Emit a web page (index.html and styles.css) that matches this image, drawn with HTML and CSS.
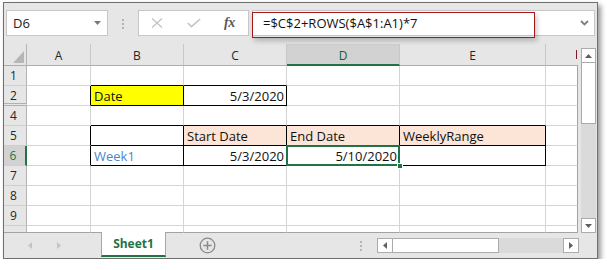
FILE: index.html
```html
<!DOCTYPE html>
<html>
<head>
<meta charset="utf-8">
<link rel="stylesheet" href="styles.css">
</head>
<body>
<div class="window">
  <div class="toolbar">
    <div class="namebox"><span class="nb-text">D6</span><svg class="caret" width="7" height="4" viewBox="0 0 7 4"><polygon points="0,0 7,0 3.5,4" fill="#7a7a7a"/></svg></div>
    <div class="grip"><i></i><i></i><i></i></div>
    <div class="fxbox">
      <svg class="ic-x" width="12" height="10" viewBox="0 0 12 10"><path d="M1 0.5 L11 9.5 M11 0.5 L1 9.5" stroke="#c4c4c4" stroke-width="1.4" fill="none"/></svg>
      <svg class="ic-ok" width="14" height="10" viewBox="0 0 14 10"><path d="M0.8 5 L4.5 8.6 L13.2 1" stroke="#c4c4c4" stroke-width="1.6" fill="none"/></svg>
      <span class="fx">fx</span>
    </div>
    <div class="formula">
      <span class="ftext">=$C$2+ROWS($A$1:A1)*7</span>
      <svg class="chev" width="9" height="6" viewBox="0 0 9 6"><path d="M1 1 L4.5 4.5 L8 1" stroke="#7f7f7f" stroke-width="1.8" fill="none"/></svg>
      <div class="hl"></div>
    </div>
  </div>
  <div class="main">
    <div class="sheet">
      <!-- header -->
      <div class="corner"><svg width="11" height="12" viewBox="0 0 11 12"><polygon points="11,0 11,12 0,12" fill="#b6b6b6"/></svg></div>
      <div class="ch">A</div>
      <div class="ch">B</div>
      <div class="ch">C</div>
      <div class="ch sel">D</div>
      <div class="ch">E</div>
      <div class="ch fh"><span class="mark"></span></div>
      <!-- row 1 -->
      <div class="rh">1</div>
      <div class="c"></div>
      <div class="c bb"></div>
      <div class="c bb"></div>
      <div class="c"></div>
      <div class="c"></div>
      <div class="c f"></div>
      <!-- row 2 -->
      <div class="rh hid">2</div>
      <div class="c br"></div>
      <div class="c bk yel">Date</div>
      <div class="c bk r">5/3/2020</div>
      <div class="c"></div>
      <div class="c"></div>
      <div class="c f"></div>
      <!-- row 4 -->
      <div class="rh">4</div>
      <div class="c"></div>
      <div class="c bb"></div>
      <div class="c bb"></div>
      <div class="c bb"></div>
      <div class="c bb"></div>
      <div class="c f"></div>
      <!-- row 5 -->
      <div class="rh">5</div>
      <div class="c br"></div>
      <div class="c bk"></div>
      <div class="c bk pch">Start Date</div>
      <div class="c bk pch">End Date</div>
      <div class="c bk pch">WeeklyRange</div>
      <div class="c f"></div>
      <!-- row 6 -->
      <div class="rh rsel">6</div>
      <div class="c br"></div>
      <div class="c bk blue">Week1</div>
      <div class="c bk r">5/3/2020</div>
      <div class="c bk r active">5/10/2020<span class="selbox"></span><span class="handle"></span></div>
      <div class="c bk"></div>
      <div class="c f"></div>
      <!-- row 7 -->
      <div class="rh">7</div>
      <div class="c"></div>
      <div class="c"></div>
      <div class="c"></div>
      <div class="c"></div>
      <div class="c"></div>
      <div class="c f"></div>
      <!-- row 8 -->
      <div class="rh">8</div>
      <div class="c"></div>
      <div class="c"></div>
      <div class="c"></div>
      <div class="c"></div>
      <div class="c"></div>
      <div class="c f"></div>
      <!-- row 9 -->
      <div class="rh">9</div>
      <div class="c"></div>
      <div class="c"></div>
      <div class="c"></div>
      <div class="c"></div>
      <div class="c"></div>
      <div class="c f"></div>
      <!-- partial row -->
      <div class="rh last"></div>
      <div class="c last"></div>
      <div class="c last"></div>
      <div class="c last"></div>
      <div class="c last"></div>
      <div class="c last"></div>
      <div class="c f last"></div>
    </div>
    <div class="vscroll">
      <div class="sbtn"><svg width="7" height="4" viewBox="0 0 7 4"><polygon points="0,4 7,4 3.5,0" fill="#606060"/></svg></div>
      <div class="vthumb"></div>
      <div class="vtrack"></div>
      <div class="sbtn"><svg width="7" height="4" viewBox="0 0 7 4"><polygon points="0,0 7,0 3.5,4" fill="#606060"/></svg></div>
    </div>
  </div>
  <div class="tabbar">
    <div class="nav">
      <svg class="nl" width="4" height="7" viewBox="0 0 4 7"><polygon points="4,0 4,7 0,3.5" fill="#c4c4c4"/></svg>
      <svg class="nr" width="4" height="7" viewBox="0 0 4 7"><polygon points="0,0 0,7 4,3.5" fill="#c4c4c4"/></svg>
    </div>
    <div class="tab">Sheet1</div>
    <svg class="add" width="17" height="17" viewBox="0 0 17 17"><circle cx="8.5" cy="8.5" r="7.3" stroke="#8a8a8a" stroke-width="1.3" fill="none"/><path d="M8.5 4.3 V12.7 M4.3 8.5 H12.7" stroke="#8a8a8a" stroke-width="1.5"/></svg>
    <div class="grip g2"><i></i><i></i><i></i></div>
    <div class="hscroll">
      <div class="hbtn"><svg width="4" height="7" viewBox="0 0 4 7"><polygon points="4,0 4,7 0,3.5" fill="#606060"/></svg></div>
      <div class="hthumb"></div>
      <div class="htrack"></div>
      <div class="hbtn"><svg width="4" height="7" viewBox="0 0 4 7"><polygon points="0,0 0,7 4,3.5" fill="#606060"/></svg></div>
    </div>
  </div>
</div>
</body>
</html>
```
FILE: styles.css
```css
* { box-sizing: border-box; }
body {
  margin: 0;
  background: #ffffff;
  font-family: "Open Sans", "Noto Sans", sans-serif;
}
.window {
  margin: 2px 0 0 3px;
  width: 595px;
  height: 257px;
  border: 1px solid #6f6f6f;
  background: #e6e6e6;
  box-shadow: 3px 3px 5px rgba(0,0,0,0.4);
  display: flex;
  flex-direction: column;
}
/* toolbar */
.toolbar {
  height: 41px;
  display: flex;
  align-items: flex-start;
  padding-top: 7px;
  flex: none;
}
.namebox {
  margin-left: 2px;
  width: 102px;
  height: 26px;
  background: #fff;
  border: 1px solid #c6c6c6;
  display: flex;
  align-items: center;
  padding-left: 6px;
  padding-right: 6px;
  font-size: 13px;
  color: #222;
}
.nb-text { flex: 1; line-height: 24px; }
.caret { margin-bottom: 1px; }
.grip {
  width: 2px;
  margin: 9px 14px 0 14px;
  display: flex;
  flex-direction: column;
  gap: 2px;
}
.grip i {
  display: block;
  width: 2px;
  height: 2px;
  background: #b4b4b4;
}
.fxbox {
  width: 111px;
  height: 26px;
  background: #fff;
  border: 1px solid #c6c6c6;
  display: flex;
  align-items: center;
}
.ic-x { margin-left: 12px; }
.ic-ok { margin-left: 24px; }
.fx {
  margin-left: 23px;
  font-family: "Liberation Serif", serif;
  font-style: italic;
  font-weight: bold;
  font-size: 14px;
  color: #5a5a5a;
  letter-spacing: -0.3px;
  line-height: 24px;
}
.formula {
  position: relative;
  margin-left: 3px;
  width: 343px;
  height: 26px;
  background: #fff;
  border: 1px solid #c6c6c6;
  display: flex;
  align-items: center;
  padding-left: 10px;
  padding-right: 5px;
}
.ftext {
  flex: 1;
  font-size: 13px;
  line-height: 24px;
  color: #111;
  white-space: nowrap;
}
.hl {
  position: absolute;
  left: -1px;
  top: 1px;
  width: 283px;
  height: 26px;
  border: 1.5px solid #a31818;
  box-shadow: 2px 3px 5px rgba(0,0,0,0.22);
}
/* main */
.main {
  height: 189px;
  display: flex;
  flex: none;
}
.sheet {
  width: 574px;
  display: grid;
  grid-template-columns: 23px 64px 93px 103px 113px 146px 32px;
  grid-template-rows: 22px repeat(8, 20px) 7px;
  background: #fff;
  font-size: 13px;
  color: #111;
}
.corner {
  background: #e6e6e6;
  border-right: 1px solid #b4b4b4;
  border-bottom: 1px solid #adadad;
  display: flex;
  justify-content: flex-end;
  align-items: flex-end;
  padding: 0 2px 2px 0;
}
.ch {
  background: #e6e6e6;
  border-right: 1px solid #c8c8c8;
  border-bottom: 1px solid #adadad;
  text-align: center;
  font-size: 12px;
  color: #262626;
  padding-top: 2px;
  line-height: 19px;
}
.ch.sel {
  background: #d2d2d2;
  border-bottom: 2px solid #217346;
  color: #1b5d38;
}
.ch.fh {
  border-right: none;
  display: flex;
  justify-content: flex-end;
  align-items: flex-start;
  padding-top: 6px;
}
.mark {
  width: 1.5px;
  height: 9px;
  background: #7a1d2b;
  margin-right: 1px;
}
.rh {
  background: #e6e6e6;
  border-right: 1px solid #b4b4b4;
  border-bottom: 1px solid #cfcfcf;
  text-align: center;
  font-size: 12px;
  color: #262626;
  line-height: 19px;
  padding-right: 3px;
}
.rh.hid {
  border-bottom: 3px double #b0b0b0;
}
.rh.rsel {
  background: #d2d2d2;
  border-right: 2px solid #217346;
  color: #217346;
}
.c {
  border-right: 1px solid #d4d4d4;
  border-bottom: 1px solid #d4d4d4;
  padding: 1px 2px 0 3px;
  line-height: 19px;
  white-space: nowrap;
  overflow: hidden;
}
.c.bb { border-bottom-color: #000; }
.c.br { border-right-color: #000; }
.c.bk { border-right-color: #000; border-bottom-color: #000; }
.c.r { text-align: right; }
.c.yel { background: #ffff00; }
.c.pch { background: #fce4d6; }
.c.blue { color: #4a86c8; }
.c.f { border-right-color: #a3a3a3; }
.rh.last, .c.last { border-bottom: 1px solid #a3a3a3; }
.c.active {
  position: relative;
  overflow: visible;
}
.selbox {
  position: absolute;
  left: -1px;
  top: -1px;
  right: -1px;
  bottom: -1px;
  border: 2px solid #217346;
}
.handle {
  position: absolute;
  right: -4px;
  bottom: -4px;
  width: 6px;
  height: 6px;
  background: #217346;
  border: 1px solid #fff;
  z-index: 2;
}
/* vertical scroll */
.vscroll {
  width: 19px;
  padding: 4px 1px 0 3px;
  display: flex;
  flex-direction: column;
}
.sbtn {
  height: 15px;
  flex: none;
  background: #fff;
  border: 1px solid #ababab;
  display: flex;
  align-items: center;
  justify-content: center;
}
.vthumb {
  height: 62px;
  margin-top: -1px;
  flex: none;
  background: #fff;
  border: 1px solid #ababab;
}
.vtrack {
  flex: 1;
  background: #dadada;
}
/* tab bar */
.tabbar {
  height: 25px;
  flex: none;
  display: flex;
  align-items: center;
}
.nav {
  width: 97px;
  display: flex;
  align-items: center;
  align-self: stretch;
}
.nl { margin-left: 24px; }
.nr { margin-left: 25px; }
.tab {
  align-self: flex-start;
  margin-top: -1px;
  width: 65px;
  height: 25px;
  background: #fff;
  border-left: 1px solid #a6a6a6;
  border-right: 1px solid #a6a6a6;
  border-bottom: 2px solid #217346;
  color: #217346;
  font-weight: bold;
  font-size: 12px;
  text-align: center;
  padding-top: 1px;
  line-height: 22px;
}
.add { margin-left: 33px; flex: none; }
.grip.g2 { margin: 0 0 0 144px; gap: 2px; }
.hscroll {
  margin-left: 15px;
  width: 202px;
  height: 15px;
  display: flex;
}
.hbtn {
  width: 16px;
  height: 15px;
  flex: none;
  background: #fff;
  border: 1px solid #ababab;
  display: flex;
  align-items: center;
  justify-content: center;
}
.hthumb {
  width: 107px;
  margin-left: -1px;
  flex: none;
  background: #fff;
  border: 1px solid #ababab;
}
.htrack {
  flex: 1;
  background: #dadada;
}
```
